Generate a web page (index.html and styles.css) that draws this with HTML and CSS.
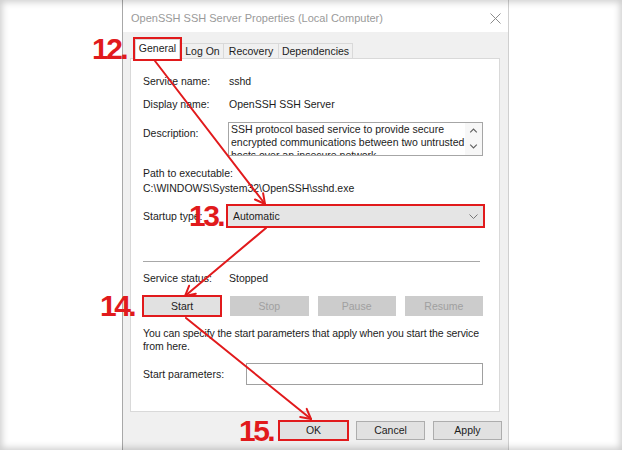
FILE: index.html
```html
<!DOCTYPE html>
<html>
<head>
<meta charset="utf-8">
<title>OpenSSH SSH Server Properties</title>
<link rel="stylesheet" href="styles.css">
</head>
<body>
<div class="frame">
  <div class="dialog">
    <div class="titlebar">
      <span class="title">OpenSSH SSH Server Properties (Local Computer)</span>
      <svg class="close" width="11" height="11" viewBox="0 0 11 11"><path d="M0.5 0.5 L10.5 10.5 M10.5 0.5 L0.5 10.5" stroke="#8c8c8c" stroke-width="1" fill="none"/></svg>
    </div>
    <div class="body">
      <div class="tabs">
        <div class="tab sel hl">General</div>
        <div class="tab t-logon">Log On</div>
        <div class="tab t-rec">Recovery</div>
        <div class="tab t-dep">Dependencies</div>
      </div>
      <div class="panel">
        <div class="row r-name"><span class="lbl">Service name:</span><span>sshd</span></div>
        <div class="row r-disp"><span class="lbl">Display name:</span><span>OpenSSH SSH Server</span></div>
        <div class="row r-desc">
          <span class="lbl lbl-desc">Description:</span>
          <div class="descbox">
            <div class="desctext">SSH protocol based service to provide secure<br>encrypted communications between two untrusted<br>hosts over an insecure network</div>
            <div class="scroll">
              <svg width="17" height="17" viewBox="0 0 17 17"><path d="M5 10 L8.5 6.5 L12 10" stroke="#606060" stroke-width="1.2" fill="none"/></svg>
              <svg width="17" height="17" viewBox="0 0 17 17"><path d="M5 6 L8.5 9.5 L12 6" stroke="#606060" stroke-width="1.2" fill="none"/></svg>
            </div>
          </div>
        </div>
        <div class="line r-path">Path to executable:</div>
        <div class="line r-pathval">C:\WINDOWS\System32\OpenSSH\sshd.exe</div>
        <div class="row r-start">
          <span class="lbl">Startup type:</span>
          <div class="select hl"><span>Automatic</span>
            <svg width="9" height="5" viewBox="0 0 9 5"><path d="M0.5 0.5 L4.5 4.5 L8.5 0.5" stroke="#777" stroke-width="1" fill="none"/></svg>
          </div>
        </div>
        <div class="sep"></div>
        <div class="row r-status"><span class="lbl">Service status:</span><span>Stopped</span></div>
        <div class="svcbtns">
          <div class="btn hl">Start</div>
          <div class="btn dis">Stop</div>
          <div class="btn dis">Pause</div>
          <div class="btn dis">Resume</div>
        </div>
        <div class="note">You can specify the start parameters that apply when you start the service<br>from here.</div>
        <div class="row r-params"><span class="lbl lbl-params">Start parameters:</span><div class="input"></div></div>
      </div>
      <div class="actions">
        <div class="btn act hl">OK</div>
        <div class="btn act">Cancel</div>
        <div class="btn act">Apply</div>
      </div>
    </div>
  </div>
  <svg class="arrows" width="622" height="450" viewBox="0 0 622 450">
    <g stroke="#e11a1c" stroke-width="2" fill="none" stroke-linecap="round" stroke-linejoin="round">
      <path d="M155 61 L265 204"/>
      <path d="M263.1 193.2 L265 204 L255 199.5"/>
      <path d="M266 228 L185 296"/>
      <path d="M195.8 293.7 L185 296 L189.1 285.8"/>
      <path d="M186 318 L311 419"/>
      <path d="M306.7 408.9 L311 419 L300.2 416.9"/>
    </g>
  </svg>
  <span class="step s12">12.</span>
  <span class="step s13">13.</span>
  <span class="step s14">14.</span>
  <span class="step s15">15.</span>
</div>
</body>
</html>
```

FILE: styles.css
```css
* { box-sizing: border-box; }
html, body { margin: 0; padding: 0; background: #fff; }
body {
  font-family: "Liberation Sans", Arial, sans-serif;
  font-size: 10.5px;
  color: #1c1c1c;
}
.frame {
  position: relative;
  width: 622px;
  height: 450px;
  overflow: hidden;
  background: #fff;
  padding-left: 122px;
}
.frame::after {
  content: "";
  position: absolute;
  inset: 0;
  box-shadow: inset 0 0 7px 2px rgba(0,0,0,0.2);
  pointer-events: none;
}
.dialog {
  width: 387px;
  height: 450px;
  border-left: 1px solid #a8a8a8;
  border-right: 1px solid #cfcfcf;
  display: flex;
  flex-direction: column;
}
.titlebar {
  height: 32px;
  flex: none;
  background: #fff;
  display: flex;
  align-items: center;
  justify-content: space-between;
  padding: 4px 7px 0 8px;
}
.title { color: #9a9a9a; font-size: 11px; }
.body {
  flex: 1;
  background: #f0f0f0;
  padding: 7px 6px 0 7px;
}
.tabs {
  height: 19px;
  display: flex;
  align-items: flex-end;
  padding-left: 5px;
}
.tab {
  height: 15px;
  line-height: 14px;
  text-align: center;
  background: #f0f0f0;
  border: 1px solid #d9d9d9;
  border-bottom: none;
}
.tab.sel {
  width: 45px;
  height: 20px;
  line-height: 17px;
  background: #fff;
  margin-bottom: -1px;
  position: relative;
  z-index: 1;
}
.t-logon { width: 43px; margin-left: 1px; }
.t-rec { width: 56px; margin-left: -1px; }
.t-dep { width: 75px; margin-left: -1px; }
.hl { outline: 2px solid #e11a1c; outline-offset: 0; }
.panel {
  width: 370px;
  height: 354px;
  background: #fff;
  border: 1px solid #d9d9d9;
  padding: 0 16px 0 12px;
}
.row { display: flex; align-items: center; line-height: 14px; }
.lbl { width: 86px; flex: none; }
.line { line-height: 14px; }
.r-name { margin-top: 15px; }
.r-disp { margin-top: 9px; }
.r-desc { margin-top: 11px; align-items: flex-start; }
.lbl-desc { width: 85px; padding-top: 4px; }
.descbox {
  width: 255px;
  height: 34px;
  border: 1px solid #a6a6a6;
  display: flex;
  overflow: hidden;
}
.desctext {
  flex: 1;
  padding: 0 0 0 2px;
  line-height: 13px;
  white-space: nowrap;
  overflow: hidden;
}
.scroll {
  width: 17px;
  flex: none;
  background: #f7f7f7;
  display: flex;
  flex-direction: column;
}
.scroll svg { display: block; }
.r-path { margin-top: 10px; }
.r-pathval { margin-top: 1px; }
.r-start { margin-top: 11px; }
.r-start .lbl { width: 85px; }
.select {
  width: 255px;
  height: 20px;
  background: #e5e5e5;
  display: flex;
  align-items: center;
  justify-content: space-between;
  padding: 0 5px 0 5px;
}
.select svg { display: block; }
.sep {
  width: 337px;
  height: 1px;
  background: #a8a8a8;
  margin-top: 35px;
}
.r-status { margin-top: 9px; }
.svcbtns {
  margin-top: 11px;
  display: grid;
  grid-template-columns: repeat(4, 1fr);
  gap: 9px;
  width: 340px;
}
.btn {
  height: 20px;
  line-height: 18px;
  text-align: center;
  background: #e1e1e1;
  border: 1px solid #adadad;
}
.btn.hl { border-color: #e11a1c; outline-offset: -1px; }
.btn.dis {
  background: #cccccc;
  border-color: #cccccc;
  color: #a0a0a0;
}
.note {
  margin-top: 11px;
  line-height: 13px;
  white-space: nowrap;
  letter-spacing: -0.1px;
}
.r-params { margin-top: 10px; }
.lbl-params { width: 103px; }
.input {
  width: 237px;
  height: 22px;
  border: 1px solid #a0a0a0;
  background: #fff;
}
.actions {
  margin-top: 9px;
  display: flex;
  justify-content: flex-end;
  gap: 8px;
}
.btn.act { width: 69px; height: 19px; line-height: 17px; }
.arrows {
  position: absolute;
  left: 0;
  top: 0;
  pointer-events: none;
  z-index: 5;
}
.step {
  position: absolute;
  z-index: 6;
  color: #e11a1c;
  font-family: "Liberation Sans", Arial, sans-serif;
  font-weight: bold;
  font-size: 30px;
  line-height: 30px;
  letter-spacing: -2.5px;
}
.s12 { left: 92px; top: 34px; }
.s13 { left: 189px; top: 201px; }
.s14 { left: 100px; top: 291px; }
.s15 { left: 239px; top: 416px; }
```
